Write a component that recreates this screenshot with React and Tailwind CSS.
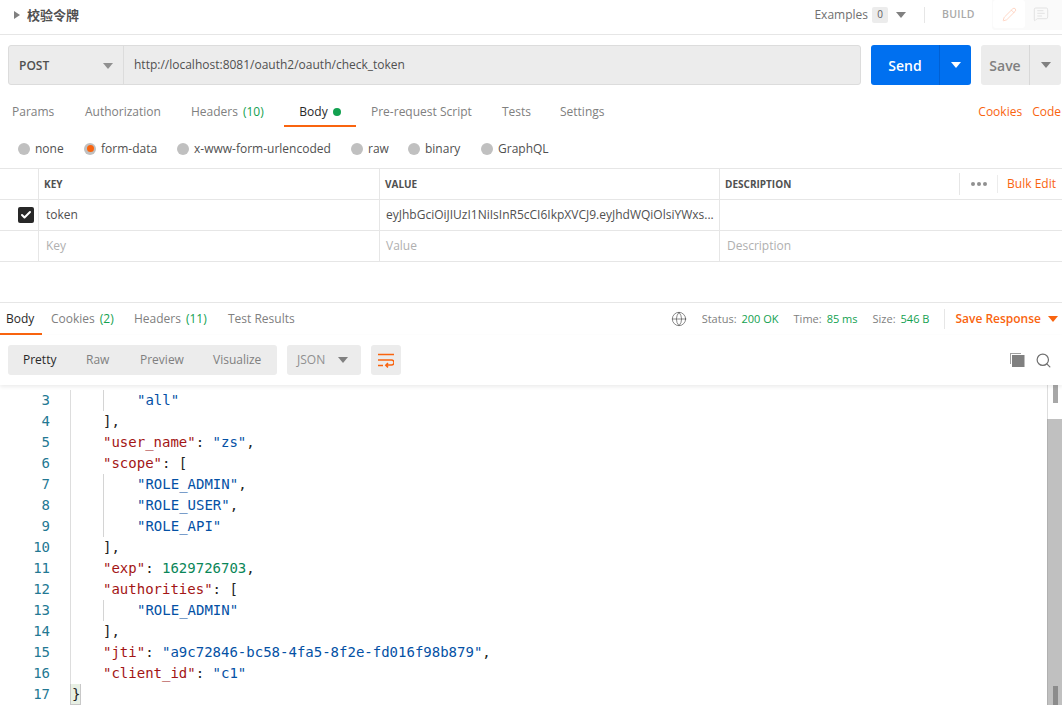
import { Pencil, MessageSquareText, Globe, Search, Check } from 'lucide-react';

const Caret = ({ className }) => (
  <svg width="10" height="6" viewBox="0 0 10 6" className={className}>
    <path d="M0 0h10L5 6z" fill="currentColor" />
  </svg>
);

const requestTabs = [
  { label: 'Params', cls: 'w-[85px] pl-[12px]' },
  { label: 'Authorization', cls: 'w-[106px] pl-0' },
  { label: 'Headers', count: '(10)', cls: 'w-[93px]' },
];

const bodyTypes = [
  { label: 'none', x: 'w-[66px]' },
  { label: 'form-data', checked: true, x: 'w-[93px]' },
  { label: 'x-www-form-urlencoded', x: 'w-[174px]' },
  { label: 'raw', x: 'w-[57px]' },
  { label: 'binary', x: 'w-[73px]' },
  { label: 'GraphQL', x: 'w-[80px]' },
];

const K = ({ children }) => <span className="text-[#a31515]">{children}</span>;
const S = ({ children }) => <span className="text-[#0451a5]">{children}</span>;
const N = ({ children }) => <span className="text-[#098658]">{children}</span>;

const Line = ({ n, indent = 1, children }) => (
  <div className="flex h-[21px] leading-[21px]">
    <div className="w-[71px] shrink-0 pr-[20px] text-right text-[#237893] border-r border-[#dddddd]">{n}</div>
    {indent === 0 && <div className="whitespace-pre">{children}</div>}
    {indent === 1 && <div className="pl-[32px] whitespace-pre">{children}</div>}
    {indent === 2 && (
      <div className="ml-[32px] pl-[33px] whitespace-pre border-l border-[#d4d4d4]">{children}</div>
    )}
  </div>
);

const App = () => {
  return (
    <div className="w-[1062px] h-[711px] overflow-hidden bg-white font-['Open_Sans',sans-serif] text-[12px] text-[#505050]">
      {/* Title bar */}
      <div className="h-[35px] border-b border-[#e6e6e6] flex items-start">
        <div className="h-[29px] flex items-center">
          <svg width="6" height="8" viewBox="0 0 6 8" className="ml-[14px] text-[#808080]">
            <path d="M0 0l6 4-6 4z" fill="currentColor" />
          </svg>
          <span className="ml-[7px] text-[13px] font-semibold font-['Noto_Sans_CJK_SC',sans-serif] text-[#505050]">校验令牌</span>
        </div>
        <div className="ml-auto flex items-start">
          <div className="h-[29px] flex items-center">
            <span className="text-[#707070]">Examples</span>
            <span className="ml-[4px] w-[16px] h-[16px] bg-[#ececec] rounded-[2px] text-[10px] text-[#606060] flex items-center justify-center">0</span>
            <Caret className="ml-[8px] text-[#808080]" />
            <div className="ml-[18px] w-px h-[16px] bg-[#e6e6e6]" />
            <span className="ml-[17px] w-[45px] text-[10.5px] font-semibold text-[#a9a9a9] tracking-[0.3px]">BUILD</span>
          </div>
          <div className="ml-[5px] w-[70px] h-[30px] bg-[#fafafa] flex rounded-bl-[3px] pl-px">
            <div className="w-[32px] h-[28px] bg-white rounded-[3px] flex items-center justify-center">
              <Pencil size={15} strokeWidth={1.2} className="text-[#ffc9b3]" />
            </div>
            <div className="w-[32px] h-[28px] flex items-center justify-center">
              <MessageSquareText size={16} strokeWidth={1} className="text-[#d8d8d8]" />
            </div>
          </div>
        </div>
      </div>

      {/* URL row */}
      <div className="mt-[10px] ml-[8px] h-[40px] flex">
        <div className="w-[853px] flex bg-[#ececec] border border-[#dcdcdc] rounded-[3px]">
          <div className="w-[115px] border-r border-[#dcdcdc] flex items-center pl-[10px] pt-px font-semibold text-[#505050]">
            POST
            <Caret className="ml-auto mr-[10px] text-[#909090]" />
          </div>
          <div className="flex items-center pl-[10px] text-[#505050]">http://localhost:8081/oauth2/oauth/check_token</div>
        </div>
        <div className="ml-[10px] w-[100px] flex bg-[#0070f0] rounded-[3px] text-white">
          <div className="w-[69px] flex items-center justify-center text-[14px] font-semibold border-r border-[#0060d4]">Send</div>
          <div className="flex-1 flex items-center justify-center"><Caret /></div>
        </div>
        <div className="ml-[10px] w-[80px] flex bg-[#ececec] rounded-[3px] text-[#808080]">
          <div className="w-[49px] flex items-center justify-center text-[14px] font-semibold border-r border-[#d8d8d8]">Save</div>
          <div className="flex-1 flex items-center justify-center"><Caret /></div>
        </div>
      </div>

      {/* Request tabs */}
      <div className="mt-[10px] h-[32px] flex text-[#808080]">
        {requestTabs.map((tab) => (
          <div key={tab.label} className={`${tab.cls} flex items-center pt-[2px] whitespace-nowrap`}>
            {tab.label}
            {tab.count && <span className="ml-[5px] text-[#12a150]">{tab.count}</span>}
          </div>
        ))}
        <div className="w-[72px] flex items-center justify-center pt-[4px] border-b-2 border-[#f9640f] text-[#282828]">
          Body
          <span className="ml-[5px] w-[8px] h-[8px] rounded-full bg-[#12a150]" />
        </div>
        <div className="ml-[15px] w-[110px] flex items-center pt-[2px] whitespace-nowrap">Pre-request Script</div>
        <div className="ml-[21px] w-[58px] flex items-center pt-[2px]">Tests</div>
        <div className="flex items-center pt-[2px]">Settings</div>
        <div className="ml-auto flex items-center pt-[2px] text-[#f9640f]">
          <span>Cookies</span>
          <span className="ml-[10px] mr-[1px]">Code</span>
        </div>
      </div>

      {/* Body type row */}
      <div className="h-[41px] pl-[18px] pt-[2px] flex items-center text-[#505050]">
        {bodyTypes.map((t) => (
          <div key={t.label} className={`${t.x} flex items-center gap-[5px] whitespace-nowrap`}>
            <span className="w-[12px] h-[12px] rounded-full bg-[#c0c0c0] flex items-center justify-center">
              {t.checked && <span className="w-[7px] h-[7px] rounded-full bg-[#f9640f]" />}
            </span>
            {t.label}
          </div>
        ))}
      </div>

      {/* Params table */}
      <div className="border-t border-[#e6e6e6]">
        <div className="h-[31px] flex border-b border-[#e6e6e6] text-[10px] font-bold text-[#505050]">
          <div className="w-[39px] border-r border-[#e6e6e6]" />
          <div className="w-[341px] border-r border-[#e6e6e6] flex items-center pl-[5px]">KEY</div>
          <div className="w-[340px] border-r border-[#e6e6e6] flex items-center pl-[5px]">VALUE</div>
          <div className="flex-1 flex items-center pl-[5px]">
            DESCRIPTION
            <div className="ml-auto h-[22px] w-px bg-[#e6e6e6]" />
            <div className="w-[37px] flex justify-center gap-[2px]">
              <span className="w-[4px] h-[4px] rounded-full bg-[#909090]" />
              <span className="w-[4px] h-[4px] rounded-full bg-[#909090]" />
              <span className="w-[4px] h-[4px] rounded-full bg-[#909090]" />
            </div>
            <span className="w-[1px] h-[18px] bg-[#ececec]" />
            <span className="ml-[9px] mr-[6px] text-[12px] font-normal text-[#f9640f] whitespace-nowrap">Bulk Edit</span>
          </div>
        </div>
        <div className="h-[31px] flex border-b border-[#e6e6e6]">
          <div className="w-[39px] border-r border-[#e6e6e6] flex items-center pl-[18px]">
            <span className="w-[16px] h-[16px] rounded-[2px] bg-[#282828] flex items-center justify-center">
              <Check size={12} strokeWidth={4} className="text-white" />
            </span>
          </div>
          <div className="w-[341px] border-r border-[#e6e6e6] flex items-center pl-[7px]">token</div>
          <div className="w-[340px] border-r border-[#e6e6e6] flex items-center pl-[6px] whitespace-nowrap overflow-hidden">eyJhbGciOiJIUzI1NiIsInR5cCI6IkpXVCJ9.eyJhdWQiOlsiYWxs...</div>
          <div className="flex-1" />
        </div>
        <div className="h-[31px] flex border-b border-[#e6e6e6] text-[#b0b0b0]">
          <div className="w-[39px] border-r border-[#e6e6e6]" />
          <div className="w-[341px] border-r border-[#e6e6e6] flex items-center pl-[7px]">Key</div>
          <div className="w-[340px] border-r border-[#e6e6e6] flex items-center pl-[6px]">Value</div>
          <div className="flex-1 flex items-center pl-[7px]">Description</div>
        </div>
      </div>

      {/* Response header */}
      <div className="mt-[40px] border-t border-[#e6e6e6] h-[33px] flex text-[#808080]">
        <div className="w-[42px] pl-[6px] pt-px flex items-center border-b-2 border-[#f9640f] text-[#282828]">Body</div>
        <div className="ml-[9px] w-[83px] flex items-center whitespace-nowrap">
          Cookies <span className="ml-[5px] text-[#12a150]">(2)</span>
        </div>
        <div className="w-[94px] flex items-center whitespace-nowrap">
          Headers <span className="ml-[5px] text-[#12a150]">(11)</span>
        </div>
        <div className="flex items-center whitespace-nowrap">Test Results</div>
        <div className="ml-auto flex items-center text-[11px] whitespace-nowrap">
          <Globe size={16} strokeWidth={1} className="text-[#505050] mr-[15px]" />
          <span className="text-[#808080]">Status:</span>
          <span className="ml-[5px] text-[#12a150]">200 OK</span>
          <span className="ml-[15px] text-[#808080]">Time:</span>
          <span className="ml-[5px] text-[#12a150]">85 ms</span>
          <span className="ml-[15px] text-[#808080]">Size:</span>
          <span className="ml-[5px] text-[#12a150]">546 B</span>
          <div className="ml-[15px] w-px h-[20px] bg-[#e6e6e6]" />
          <span className="ml-[10px] text-[12px] font-semibold text-[#f9640f]">Save Response</span>
          <Caret className="ml-[7px] mr-[4px] text-[#f9640f]" />
        </div>
      </div>

      {/* Response toolbar */}
      <div className="h-[50px] pt-[10px] pb-[10px] pl-[8px] flex shadow-[0_2px_4px_rgba(0,0,0,0.08)] relative text-[#808080]">
        <div className="w-[269px] h-[30px] bg-[#ececec] rounded-[3px] flex items-center">
          <span className="ml-[15px] w-[63px] text-[#282828]">Pretty</span>
          <span className="w-[54px]">Raw</span>
          <span className="w-[73px]">Preview</span>
          <span>Visualize</span>
        </div>
        <div className="ml-[10px] w-[74px] h-[30px] bg-[#ececec] rounded-[3px] flex items-center pl-[10px] text-[#909090]">
          JSON
          <Caret className="ml-auto mr-[13px] text-[#808080]" />
        </div>
        <div className="ml-[10px] w-[30px] h-[30px] bg-[#ececec] rounded-[3px] flex items-center justify-center">
          <svg width="16" height="15" viewBox="0 0 16 15" fill="none" stroke="#f9640f" strokeWidth="1.5">
            <path d="M0 1.5h16M0 7h13.5a2.2 2.2 0 0 1 0 5H8M0 12.5h5M10 10l-2.2 2.2L10 14.4" />
          </svg>
        </div>
        <div className="ml-auto mr-[10px] flex items-center gap-[10px]">
          <svg width="15" height="14" viewBox="0 0 15 14">
            <path d="M0 0h11v1H1v10H0z" fill="#a0a0a0" />
            <rect x="2" y="2" width="12.5" height="12" fill="#808080" />
          </svg>
          <Search size={17} strokeWidth={1.7} className="text-[#707070]" />
        </div>
      </div>

      {/* Response code */}
      <div className="h-[320px] flex font-['DejaVu_Sans_Mono',monospace] text-[14px] text-[#222222]">
        <div className="flex-1 pt-[5px]">
          <Line n="3" indent={2}><S>"all"</S></Line>
          <Line n="4">],</Line>
          <Line n="5"><K>"user_name"</K>: <S>"zs"</S>,</Line>
          <Line n="6"><K>"scope"</K>: [</Line>
          <Line n="7" indent={2}><S>"ROLE_ADMIN"</S>,</Line>
          <Line n="8" indent={2}><S>"ROLE_USER"</S>,</Line>
          <Line n="9" indent={2}><S>"ROLE_API"</S></Line>
          <Line n="10">],</Line>
          <Line n="11"><K>"exp"</K>: <N>1629726703</N>,</Line>
          <Line n="12"><K>"authorities"</K>: [</Line>
          <Line n="13" indent={2}><S>"ROLE_ADMIN"</S></Line>
          <Line n="14">],</Line>
          <Line n="15"><K>"jti"</K>: <S>"a9c72846-bc58-4fa5-8f2e-fd016f98b879"</S>,</Line>
          <Line n="16"><K>"client_id"</K>: <S>"c1"</S></Line>
          <Line n="17" indent={0}>
            <span className="inline-block h-[21px] bg-[#e8f0e4] border border-[#c8c8c8] border-t-0 -ml-px pl-px">{'}'}</span>
          </Line>
        </div>
        {/* overview ruler */}
        <div className="w-[15px] h-[320px] flex flex-col">
          <div className="h-[34px] border-l border-[#dddddd] pl-[5px]">
            <div className="w-[5px] h-[18px] bg-[#a8a8a8]" />
          </div>
          <div className="h-[286px] bg-[#c0c0c0] border-l border-[#b0b0b0] pl-[5px] flex items-end">
            <div className="w-[5px] h-[19px] bg-[#8c8c8c]" />
          </div>
        </div>
      </div>
    </div>
  );
};

export default App;
